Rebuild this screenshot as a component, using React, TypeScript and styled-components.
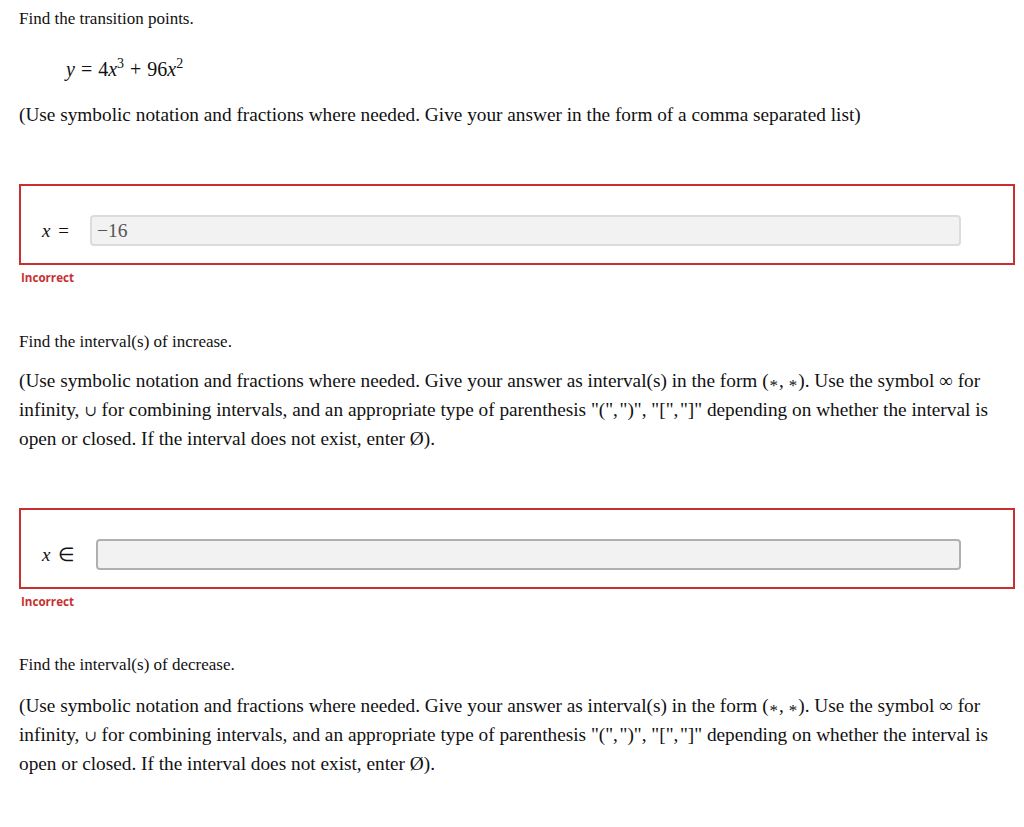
import React from 'react';
import styled, { createGlobalStyle } from 'styled-components';

const GlobalStyle = createGlobalStyle`
  html, body {
    margin : 0;
    padding : 0;
    background : #fff;
  }
  body {
    font-family : "Liberation Serif", "Times New Roman", serif;
    font-size : 17px;
    color : #111;
  }
`

const Page = styled.div`
  padding : 4px 9px 40px 19px;
`

const Heading = styled.p`
  margin : ${(props : {top : number}) => `${props.top}px`} 0 0 0;
  line-height : 29px;
  font-size : 17px;
`

const Equation = styled.div`
  margin : 22px 0 0 47px;
  line-height : 29px;
  font-size : 20px;
`

const Op = styled.span`
  margin : 0 6px;
`

const Note = styled.p`
  margin : ${(props : {top : number}) => `${props.top}px`} 0 0 0;
  line-height : 29px;
  font-size : 19.3px;
`

const Var = styled.i`
  font-family : "Liberation Serif", serif;
`

const Sup = styled.sup`
  font-size : 14px;
  vertical-align : 8px;
  line-height : 1;
`

const Star = styled.span`
  font-size : 17px;
  position : relative;
  top : 4px;
  margin : 0 1px;
  line-height : 1;
`

const Cup = styled.span`
  font-family : "DejaVu Serif", serif;
  font-size : 15px;
  line-height : 1;
`

const AnswerBox = styled.div`
  margin-top : ${(props : {top : number}) => `${props.top}px`};
  border : 2px solid #c8302f;
  padding : 29px 52px 17px 21px;
  display : flex;
  align-items : center;
`

const Label = styled.span`
  padding-right : 21px;
  font-size : 19px;
  white-space : nowrap;
  word-spacing : 3px;
`

const Field = styled.div`
  flex : 1;
  height : 27px;
  background : #f2f2f2;
  border : 2px solid ${(props : {edge : string}) => props.edge};
  border-radius : 4px;
  display : flex;
  align-items : center;
  padding : 0 5px;
  color : #555;
  font-size : 19.5px;
`

const Feedback = styled.div`
  margin-top : 5px;
  padding-left : 2px;
  font-family : "Open Sans", "Liberation Sans", sans-serif;
  font-size : 11.6px;
  font-weight : 700;
  line-height : 16px;
  color : #c8302f;
`

const IntervalNote = ({top} : {top : number}) => (
  <Note top={top}>
    (Use symbolic notation and fractions where needed. Give your answer as interval(s) in the form (<Star>*</Star>,&#8201;<Star>*</Star>). Use the symbol ∞ for infinity, <Cup>∪</Cup> for combining intervals, and an appropriate type of parenthesis "(",&#8202;")", "[",&#8202;"]" depending on whether the interval is open or closed. If the interval does not exist, enter Ø).
  </Note>
)

const App = () => {
  return (
    <>
      <GlobalStyle />
      <Page>
        <Heading top={0}>Find the transition points.</Heading>
        <Equation>
          <Var>y</Var><Op>=</Op>4<Var>x</Var><Sup>3</Sup><Op>+</Op>96<Var>x</Var><Sup>2</Sup>
        </Equation>
        <Note top={16}>(Use symbolic notation and fractions where needed. Give your answer in the form of a comma separated list)</Note>

        <AnswerBox top={55}>
          <Label><Var>x</Var> =</Label>
          <Field edge="#dcdcdc">−16</Field>
        </AnswerBox>
        <Feedback>Incorrect</Feedback>

        <Heading top={41}>Find the interval(s) of increase.</Heading>
        <IntervalNote top={10} />

        <AnswerBox top={55}>
          <Label><Var>x</Var> ∈</Label>
          <Field edge="#b0b0b0"></Field>
        </AnswerBox>
        <Feedback>Incorrect</Feedback>

        <Heading top={40}>Find the interval(s) of decrease.</Heading>
        <IntervalNote top={12} />
      </Page>
    </>
  )
}

export default App;
